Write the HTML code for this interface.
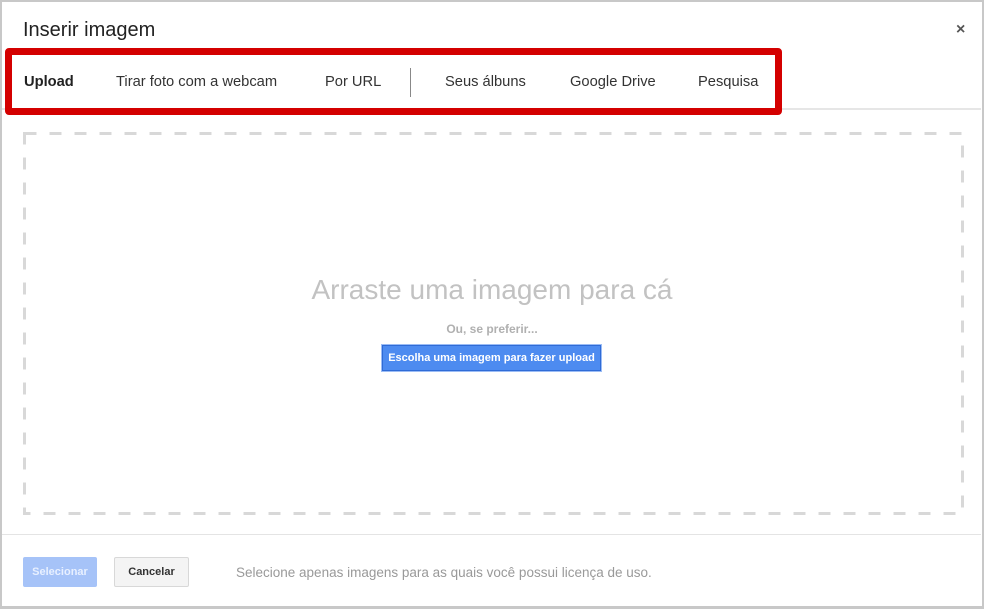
<!DOCTYPE html>
<html><head><meta charset="utf-8"><style>
*{margin:0;padding:0;box-sizing:border-box}
body{width:984px;height:609px;background:#fff;font-family:"Liberation Sans",Arial,sans-serif;position:relative;overflow:hidden}
.frame{position:absolute;left:0;top:0;width:984px;height:609px;border:2px solid #c8c8c8;border-bottom-width:3px}
.title{position:absolute;left:23px;top:19px;font-size:20px;color:#222}
.close{position:absolute;left:956px;top:21px;font-size:16px;color:#555;font-weight:bold}
.shadow{position:absolute;left:2px;right:3px;top:108px;height:2px;background:#e6e6e6}
.red{position:absolute;left:5px;top:48px;width:777px;height:67px;border:7px solid #d40000;border-radius:4px;background:#fff}
.tab{position:absolute;top:74px;font-size:14.7px;color:#333}
.sep{position:absolute;left:410px;top:68px;width:1px;height:29px;background:#888}
.drop{position:absolute;left:23px;top:132px}
.big{position:absolute;left:0;width:984px;top:274px;text-align:center;font-size:28px;color:#c2c2c2}
.ou{position:absolute;left:0;width:984px;top:322px;text-align:center;font-size:12px;color:#b0b0b0;font-weight:bold}
.btn{position:absolute;left:382px;top:345px;width:219px;height:26px;background:#4d8bf0;border:1px solid #2f6bd6;color:#fff;font-size:11px;font-weight:bold;text-align:center;line-height:24px;box-shadow:0 0 0 1px #9bbcf5}
.fsep{position:absolute;left:2px;right:3px;top:534px;height:1px;background:#e4e4e4}
.sel{position:absolute;left:23px;top:557px;width:74px;height:30px;background:#a6c3f8;border-radius:2px;color:#e8f0ff;font-size:11px;font-weight:bold;text-align:center;line-height:30px}
.can{position:absolute;left:114px;top:557px;width:75px;height:30px;background:#f4f4f4;border:1px solid #d8d8d8;border-radius:2px;color:#333;font-size:11px;font-weight:bold;text-align:center;line-height:28px}
.note{position:absolute;left:236px;top:565px;font-size:13.5px;color:#999}
</style></head><body>
<div class="frame"></div>
<div class="title">Inserir imagem</div>
<div class="close">×</div>
<div class="shadow"></div>
<div class="red"></div>
<div class="tab" style="left:24px;font-weight:bold;color:#222">Upload</div>
<div class="tab" style="left:116px">Tirar foto com a webcam</div>
<div class="tab" style="left:325px">Por URL</div>
<div class="sep"></div>
<div class="tab" style="left:445px">Seus álbuns</div>
<div class="tab" style="left:570px">Google Drive</div>
<div class="tab" style="left:698px">Pesquisa</div>
<svg class="drop" width="941" height="383"><rect x="1.5" y="1.5" width="938" height="380" fill="none" stroke="#d8d8d8" stroke-width="3" stroke-dasharray="12 13"/></svg>
<div class="big">Arraste uma imagem para cá</div>
<div class="ou">Ou, se preferir...</div>
<div class="btn">Escolha uma imagem para fazer upload</div>
<div class="fsep"></div>
<div class="sel">Selecionar</div>
<div class="can">Cancelar</div>
<div class="note">Selecione apenas imagens para as quais você possui licença de uso.</div>
</body></html>
